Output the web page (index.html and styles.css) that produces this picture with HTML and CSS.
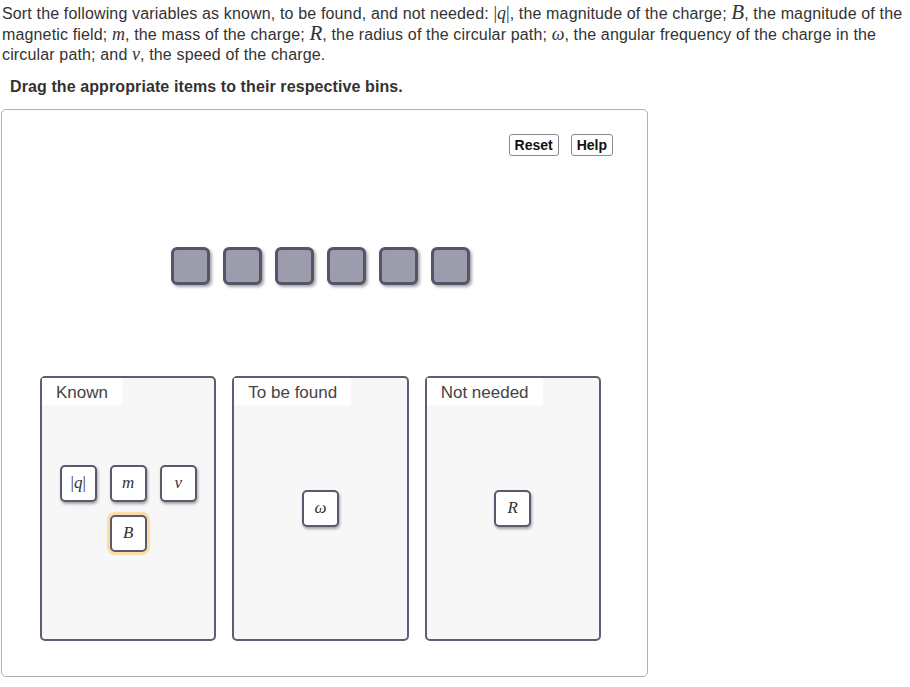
FILE: index.html
```html
<!DOCTYPE html>
<html lang="en">
<head>
  <meta charset="UTF-8" />
  <title>Sort the variables</title>
  <link rel="stylesheet" href="styles.css">
</head>
<body>
  <p class="question">
    Sort the following variables as known, to be found, and not needed: <span class="mx">|<i>q</i>|</span>, the magnitude of the charge; <i class="mx big">B</i>, the magnitude of the magnetic field; <i class="mx">m</i>, the mass of the charge; <i class="mx big">R</i>, the radius of the circular path; <i class="mx">ω</i>, the angular frequency of the charge in the circular path; and <i class="mx">v</i>, the speed of the charge.
  </p>
  <p class="instruction">Drag the appropriate items to their respective bins.</p>

  <div class="activity">
    <div class="toolbar">
      <button class="btn">Reset</button>
      <button class="btn">Help</button>
    </div>

    <div class="work">
      <div class="source">
        <div class="slot"></div>
        <div class="slot"></div>
        <div class="slot"></div>
        <div class="slot"></div>
        <div class="slot"></div>
        <div class="slot"></div>
      </div>

      <div class="bins">
        <div class="bin">
          <div class="bin-label">Known</div>
          <div class="items">
            <div class="item"><span>|<i>q</i>|</span></div>
            <div class="item"><i>m</i></div>
            <div class="item"><i>v</i></div>
            <div class="item selected"><i>B</i></div>
          </div>
        </div>
        <div class="bin">
          <div class="bin-label">To be found</div>
          <div class="items">
            <div class="item"><i>ω</i></div>
          </div>
        </div>
        <div class="bin">
          <div class="bin-label">Not needed</div>
          <div class="items">
            <div class="item"><i>R</i></div>
          </div>
        </div>
      </div>
    </div>
  </div>
</body>
</html>
```

FILE: styles.css
```css
body {
  margin: 0;
  padding: 0 2px;
  font-family: "Liberation Sans", Arial, sans-serif;
  font-size: 16px;
  color: #333;
  background: #fff;
}

.question {
  margin: 4px 0 0;
  line-height: 20.5px;
  letter-spacing: 0.15px;
}

.mx {
  font-family: "Liberation Serif", "DejaVu Serif", serif;
  font-size: 18px;
  line-height: 16px;
  letter-spacing: 0;
}

.mx.big {
  font-size: 21px;
}

.instruction {
  margin: 11px 0 0 8px;
  font-weight: bold;
  line-height: 20px;
  letter-spacing: 0.1px;
}

.activity {
  margin: 12px 0 0 -1px;
  width: 645px;
  height: 566px;
  border: 1px solid #b0b0b0;
  border-radius: 5px;
}

.toolbar {
  display: flex;
  justify-content: flex-end;
  gap: 12px;
  padding: 24px 34px 0 0;
}

.btn {
  height: 22px;
  padding: 0 5px;
  border: 1px solid #8a8a8a;
  border-radius: 3px;
  background: #fff;
  font-family: "Liberation Sans", Arial, sans-serif;
  font-size: 14px;
  font-weight: bold;
  color: #111;
}

.work {
  width: 561px;
  margin-left: 38px;
}

.source {
  display: flex;
  justify-content: center;
  gap: 13px;
  margin-top: 91px;
}

.slot {
  width: 33px;
  height: 32px;
  background: #9d9cac;
  border: 3px solid #55556a;
  border-radius: 6px;
  box-shadow: 2px 2px 3px rgba(0, 0, 0, 0.35);
}

.bins {
  display: flex;
  gap: 16px;
  margin-top: 91px;
}

.bin {
  position: relative;
  width: 173px;
  height: 261px;
  background: #f7f7f7;
  border: 2px solid #5e5e70;
  border-radius: 5px;
  display: flex;
  align-items: center;
  justify-content: center;
}

.bin-label {
  position: absolute;
  top: 0;
  left: 0;
  height: 27px;
  padding: 0 14px;
  background: #fff;
  font-size: 17px;
  line-height: 29px;
  color: #444;
}

.items {
  width: 142px;
  display: flex;
  flex-wrap: wrap;
  justify-content: center;
  gap: 13px 13px;
}

.item {
  width: 33px;
  height: 33px;
  background: #fff;
  border: 2.5px solid #5a5a6c;
  border-radius: 5px;
  box-shadow: 1px 2px 3px rgba(0, 0, 0, 0.35);
  display: flex;
  align-items: center;
  justify-content: center;
  font-family: "Liberation Serif", "DejaVu Serif", serif;
  font-size: 17px;
  color: #333;
}

.item.selected {
  box-shadow: 0 0 1px 3px #fcdba6;
}
```
